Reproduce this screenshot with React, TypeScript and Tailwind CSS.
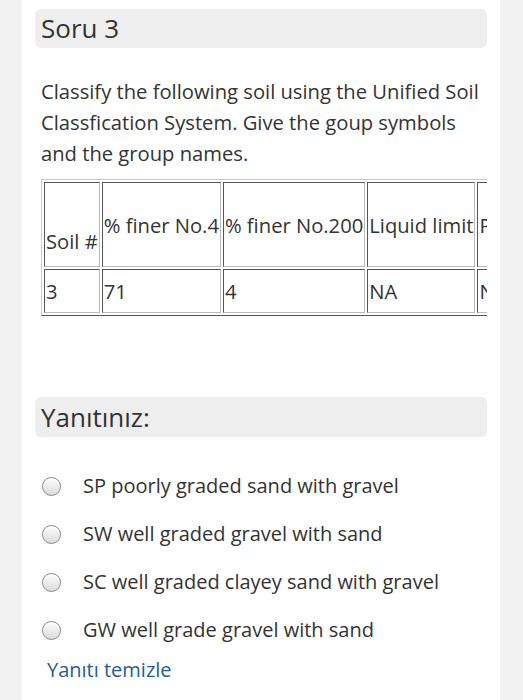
import React from 'react';

const options = [
  'SP poorly graded sand with gravel',
  'SW well graded gravel with sand',
  'SC well graded clayey sand with gravel',
  'GW well grade gravel with sand',
];

const cell =
  'whitespace-nowrap border border-t-[#555] border-l-[#555] border-r-[#bbb] border-b-[#bbb] px-[1px] text-left font-normal';

const App: React.FC = () => {
  return (
    <div
      className="min-h-[700px] bg-[#f2f2f2] text-[#333]"
      style={{ fontFamily: '"Open Sans", "Noto Sans", sans-serif' }}
    >
      <div className="mx-[22px] min-h-[700px] w-[478px] bg-white px-[13px] pt-[9px]">
        {/* --- soru başlığı --- */}
        <div className="flex h-[39px] items-center rounded-md bg-[#eeeeee] px-[6px] text-[26px] font-normal">
          Soru 3
        </div>

        <p className="mt-[28px] px-[6px] text-[20.2px] leading-[31px]">
          Classify the following soil using the Unified Soil Classfication System. Give the goup symbols and the
          group names.
        </p>

        {/* --- tablo --- */}
        <div className="ml-[6px] mt-[10px] w-[446px] overflow-hidden">
          <table className="border-separate border-spacing-[2px] border border-t-[#ccc] border-l-[#ccc] border-r-[#555] border-b-[#555] text-[20.2px] leading-[26px]">
            <tbody>
              <tr className="h-[85px]">
                <th className={`${cell} pt-[32px]`}>Soil #</th>
                <th className={cell}>% finer No.4</th>
                <th className={cell}>% finer No.200</th>
                <th className={cell}>Liquid limit</th>
                <th className={cell}>Plastic limit</th>
              </tr>
              <tr className="h-[44px]">
                <td className={cell}>3</td>
                <td className={cell}>71</td>
                <td className={cell}>4</td>
                <td className={cell}>NA</td>
                <td className={cell}>NP</td>
              </tr>
            </tbody>
          </table>
        </div>

        {/* --- yanıt --- */}
        <div className="mt-[81px] flex h-[40px] items-center rounded-md bg-[#eeeeee] px-[6px] text-[26px] font-normal">
          Yanıtınız:
        </div>

        <div className="mt-[25px] flex flex-col">
          {options.map((o) => (
            <label key={o} className="flex h-[48px] items-center text-[20px]">
              <span className="ml-[7px] h-[19px] w-[19px] rounded-full border border-[#8a8a8a] bg-gradient-to-b from-[#fdfdfd] to-[#dcdcdc] shadow-[inset_0_1px_1px_rgba(255,255,255,0.8)]" />
              <span className="ml-[22px]">{o}</span>
            </label>
          ))}
        </div>

        <div className="ml-[12px] mt-[1px] text-[20px] text-[#1f5d97]">Yanıtı temizle</div>
      </div>
    </div>
  );
};

export default App;
